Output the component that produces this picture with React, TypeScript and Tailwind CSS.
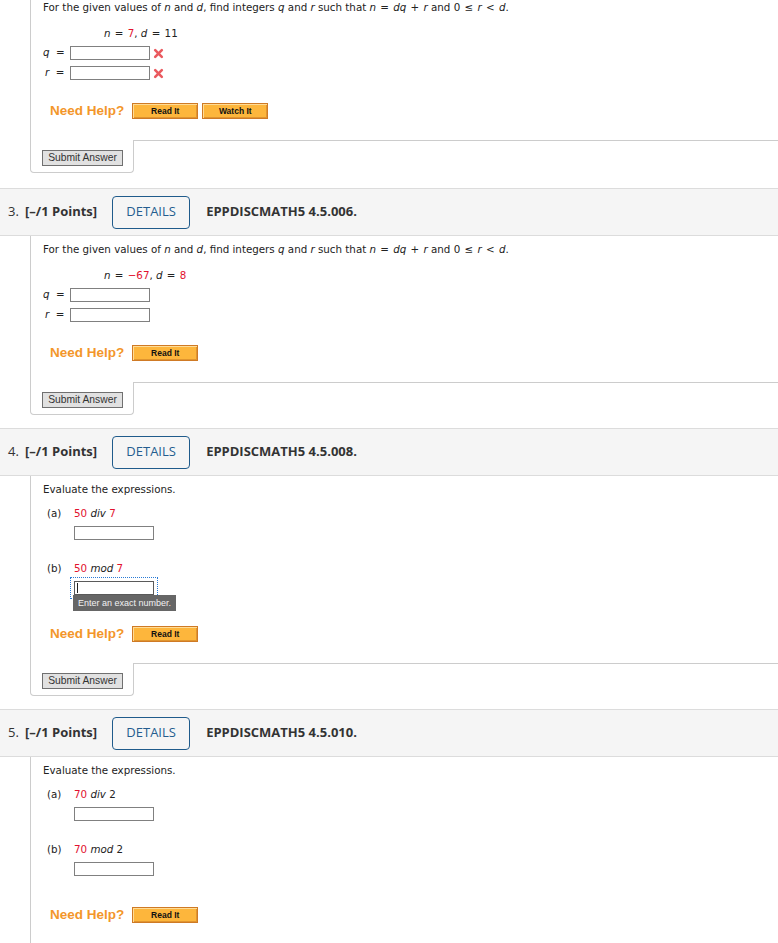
import type { ReactNode } from "react";

const red = "text-[#e2112f]";

function V({ children }: { children: ReactNode }) {
  return <i className="italic">{children}</i>;
}

function Op({ children }: { children: ReactNode }) {
  return <span className="mx-[1px]">{children}</span>;
}

function Header({ num, code }: { num: number; code: string }) {
  return (
    <div className="flex h-[48px] items-center border-y border-[#dcdcdc] bg-[#f5f5f5] font-['Open_Sans',sans-serif] text-[13px] text-[#333]">
      <span className="ml-[8px] w-[17px]">{num}.</span>
      <span className="font-bold">[–/1 Points]</span>
      <button className="ml-[15px] h-[33px] w-[78px] rounded-[4px] border border-[#1f5b8b] text-[13px] text-[#245d8f]">
        DETAILS
      </button>
      <span className="ml-[16px] font-bold">{code}</span>
    </div>
  );
}

function Body({ children, footer = true, first = false }: { children: ReactNode; footer?: boolean; first?: boolean }) {
  return (
    <div className={`ml-[30px] ${first ? "-mt-[6px]" : ""}`}>
      <div className="border-l border-[#cccccc] pl-[12px] pt-[6px] font-['DejaVu_Sans',sans-serif] text-[10.3px] text-[#222]">
        {children}
      </div>
      {footer && (
        <div className="flex">
          <div className="h-[33px] w-[104px] rounded-b-[4px] border-x border-b border-[#cccccc] pl-[11px] pt-[10px]">
            <button className="flex h-[16px] w-[81px] items-center justify-center border border-[#707070] bg-[#e1e1e1] font-['Liberation_Sans',sans-serif] text-[10.3px] leading-none text-[#333]">
              Submit Answer
            </button>
          </div>
          <div className="flex-1 border-t border-[#cccccc]" />
        </div>
      )}
    </div>
  );
}

function OrangeButton({ label }: { label: string }) {
  return (
    <button className="flex h-[16px] w-[66px] items-center justify-center border border-[#cf7a25] bg-[#fdb63c] font-['Liberation_Sans',sans-serif] text-[8.5px] font-bold leading-none text-[#111] shadow-[inset_1px_1px_0_#ffdc96,inset_-1px_-1px_0_#e0952f]">
      {label}
    </button>
  );
}

function NeedHelp({ watch = false, mt }: { watch?: boolean; mt: string }) {
  return (
    <div className={`flex h-[16px] items-center ${mt}`}>
      <span className="ml-[7px] font-['Liberation_Sans',sans-serif] text-[13.5px] font-bold text-[#f3962a]">Need Help?</span>
      <div className="ml-[8px] flex gap-[4px]">
        <OrangeButton label="Read It" />
        {watch && <OrangeButton label="Watch It" />}
      </div>
    </div>
  );
}

function Cross() {
  return (
    <svg width="11" height="11" viewBox="0 0 11 11" className="ml-[3px]">
      <path d="M2.2 2.2L8.8 8.8M8.8 2.2L2.2 8.8" stroke="#ea5a5f" strokeWidth="2.6" strokeLinecap="round" />
    </svg>
  );
}

function Field() {
  return <span className="block h-[14px] w-[80px] border border-[#808080] bg-white" />;
}

function DivisionQuestion({ n, d, marks = false, watch = false }: { n: ReactNode; d: ReactNode; marks?: boolean; watch?: boolean }) {
  return (
    <>
      <p className="h-[14px] leading-[14px]">
        For the given values of <V>n</V> and <V>d</V>, find integers <V>q</V> and <V>r</V> such that <V>n</V> <Op>=</Op> <V>dq</V>{" "}
        <Op>+</Op> <V>r</V> and 0 <Op>≤</Op> <V>r</V> <Op>&lt;</Op> <V>d</V>.
      </p>
      <p className="ml-[61px] mt-[12px] h-[14px] leading-[14px]">
        <V>n</V> <Op>=</Op> {n}, <V>d</V> <Op>=</Op> {d}
      </p>
      <div className="mt-[6px] flex h-[14px] items-center">
        <span className="w-[27px]">
          <V>q</V> &nbsp;=
        </span>
        <Field />
        {marks && <Cross />}
      </div>
      <div className="mt-[6px] flex h-[14px] items-center">
        <span className="w-[27px] pl-[2px]">
          <V>r</V> &nbsp;=
        </span>
        <Field />
        {marks && <Cross />}
      </div>
      <NeedHelp watch={watch} mt="mt-[23px]" />
      <div className="h-[21px]" />
    </>
  );
}

function ExprQuestion({ a, b, focused = false, last = false }: { a: ReactNode; b: ReactNode; focused?: boolean; last?: boolean }) {
  return (
    <>
      <p className="h-[14px] leading-[14px]">Evaluate the expressions.</p>
      <p className="ml-[4px] mt-[10px] flex h-[14px] leading-[14px]">
        <span className="w-[27px]">(a)</span>
        <span>{a}</span>
      </p>
      <div className="ml-[31px] mt-[6px]">
        <Field />
      </div>
      <p className="ml-[4px] mt-[21px] flex h-[14px] leading-[14px]">
        <span className="w-[27px]">(b)</span>
        <span>{b}</span>
      </p>
      <div className="relative ml-[31px] mt-[6px] w-[80px]">
        {focused ? (
          <>
            <span className="relative block h-[14px] w-[80px] border border-[#5a5a5a] bg-white outline-1 outline-offset-[3px] outline-[#2a7ad5] outline-dotted">
              <span className="absolute left-[2px] top-[1px] h-[10px] w-px bg-[#222]" />
            </span>
            <span className="absolute left-[-1px] top-full whitespace-nowrap bg-[#666] px-[5px] font-['Liberation_Sans',sans-serif] text-[9px] leading-[16px] text-[#f2f2f2]">
              Enter an exact number.
            </span>
          </>
        ) : (
          <Field />
        )}
      </div>
      <NeedHelp mt="mt-[31px]" />
      <div className={last ? "h-[40px]" : "h-[21px]"} />
    </>
  );
}

export default function App() {
  return (
    <div className="min-h-[943px] overflow-hidden bg-white">
      <Body first>
        <DivisionQuestion n={<span className={red}>7</span>} d="11" marks watch />
      </Body>

      <div className="mt-[15px]">
        <Header num={3} code="EPPDISCMATH5 4.5.006." />
        <Body>
          <DivisionQuestion n={<span className={red}>−67</span>} d={<span className={red}>8</span>} />
        </Body>
      </div>

      <div className="mt-[13px]">
        <Header num={4} code="EPPDISCMATH5 4.5.008." />
        <Body>
          <ExprQuestion
            a={
              <>
                <span className={red}>50</span> <V>div</V> <span className={red}>7</span>
              </>
            }
            b={
              <>
                <span className={red}>50</span> <V>mod</V> <span className={red}>7</span>
              </>
            }
            focused
          />
        </Body>
      </div>

      <div className="mt-[13px]">
        <Header num={5} code="EPPDISCMATH5 4.5.010." />
        <Body footer={false}>
          <ExprQuestion
            a={
              <>
                <span className={red}>70</span> <V>div</V> 2
              </>
            }
            b={
              <>
                <span className={red}>70</span> <V>mod</V> 2
              </>
            }
            last
          />
        </Body>
      </div>
    </div>
  );
}
